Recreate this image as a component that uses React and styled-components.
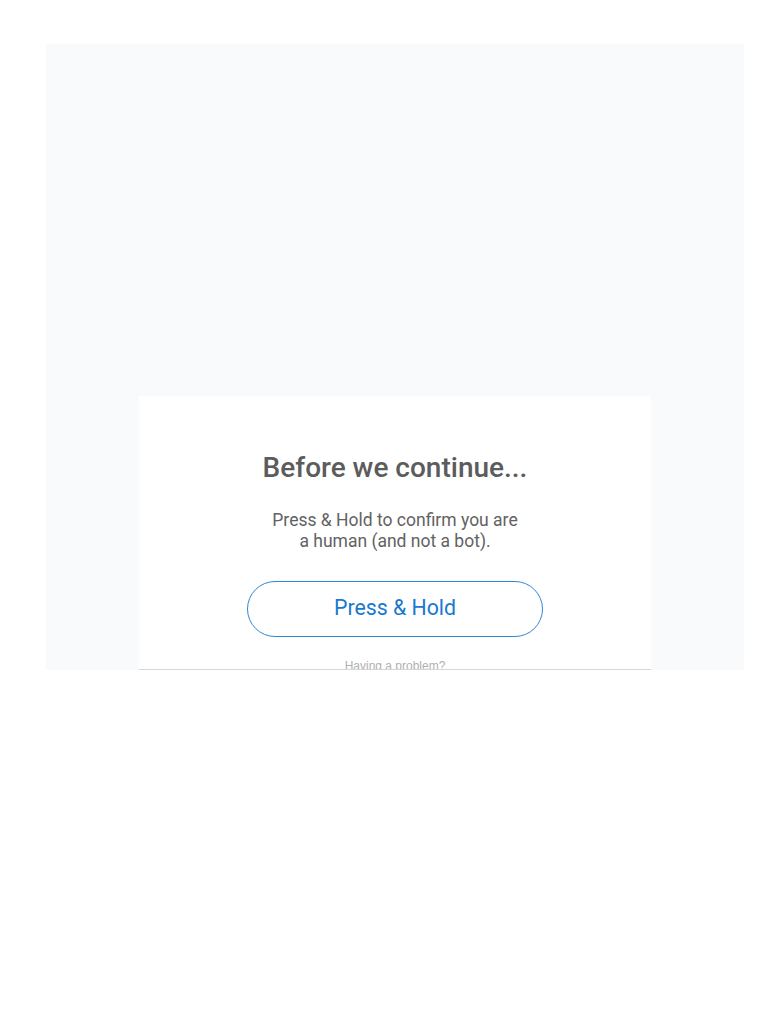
import React from "react";
import styled, { createGlobalStyle } from "styled-components";

const GlobalStyle = createGlobalStyle`
  body {
    margin: 0;
    background: #ffffff;
    font-family: Roboto, "Liberation Sans", Arial, sans-serif;
  }
`;

const Page = styled.div`
  padding: 44px 24px 0 46px;
`;

const Panel = styled.div`
  width: 698px;
  height: 626px;
  background: #f9fafb;
  display: flex;
  flex-direction: column;
  align-items: center;
`;

const Card = styled.div`
  margin-top: 352px;
  width: 512px;
  height: 274px;
  flex-shrink: 0;
  box-sizing: border-box;
  background: #ffffff;
  border-bottom: 1px solid #d6d6d6;
  overflow: hidden;
  display: flex;
  flex-direction: column;
  align-items: center;
  padding-top: 55px;
  text-align: center;

  & > * {
    flex-shrink: 0;
  }
`;

const Title = styled.h1`
  margin: 0;
  font-family: Roboto, sans-serif;
  font-weight: 500;
  font-size: 28px;
  line-height: 33px;
  color: #5c5c5c;
`;

const Message = styled.p`
  margin: 26px 0 0;
  font-family: Roboto, sans-serif;
  font-size: 17.5px;
  line-height: 21px;
  color: #626262;
`;

const HoldButton = styled.button`
  margin-top: 29px;
  width: 296px;
  height: 56px;
  box-sizing: border-box;
  padding: 0 0 3px;
  border: 1.5px solid #2f86d6;
  border-radius: 28px;
  background: #ffffff;
  color: #1a78cf;
  font-family: Roboto, sans-serif;
  font-size: 21.3px;
  cursor: pointer;
`;

const Problem = styled.a`
  margin-top: 22px;
  font-family: "Liberation Sans", Arial, sans-serif;
  font-size: 12px;
  line-height: 14px;
  color: #b0b0b0;
  text-decoration: none;
`;

const App = () => {
  return (
    <>
      <GlobalStyle />
      <Page>
        <Panel>
          <Card>
            <Title>Before we continue...</Title>
            <Message>
              Press &amp; Hold to confirm you are
              <br />a human (and not a bot).
            </Message>
            <HoldButton>Press &amp; Hold</HoldButton>
            <Problem>Having a problem?</Problem>
          </Card>
        </Panel>
      </Page>
    </>
  );
};

export default App;
